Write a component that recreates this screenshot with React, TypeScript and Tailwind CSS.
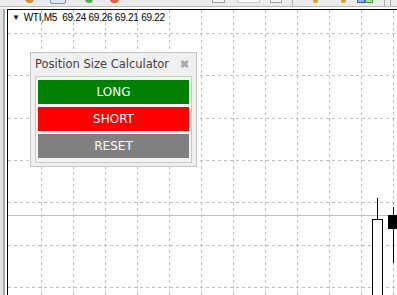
import React from "react";

const W = 389;
const H = 285;

function Grid() {
  const vx = [41, 73, 105, 137, 169, 201, 233, 265, 297, 329, 361, 393].map((x) => x - 8);
  const hy = [33, 75, 118, 160, 202, 245, 287].map((y) => y - 10);
  return (
    <svg width={W} height={H} className="absolute left-0 top-0" shapeRendering="crispEdges">
      {vx.map((x) => (
        <line key={"v" + x} x1={x + 0.5} y1={0} x2={x + 0.5} y2={H} stroke="#c0c0c0" strokeDasharray="3 3" />
      ))}
      {hy.map((y) => (
        <line key={"h" + y} x1={0} y1={y + 0.5} x2={W} y2={y + 0.5} stroke="#c0c0c0" strokeDasharray="3 3" />
      ))}
      <line x1={0} y1={215.5 - 10} x2={W} y2={215.5 - 10} stroke="#c0c0c0" />
      <line x1={377.5 - 8} y1={198 - 10} x2={377.5 - 8} y2={219 - 10} stroke="#000" />
      <rect x={372.5 - 8} y={219.5 - 10} width={10} height={90} fill="#fff" stroke="#000" />
      <line x1={393.5 - 8} y1={207 - 10} x2={393.5 - 8} y2={263 - 10} stroke="#000" />
      <rect x={388 - 8} y={215 - 10} width={12} height={14} fill="#000" />
    </svg>
  );
}

function Toolbar() {
  return (
    <div className="flex items-end h-[7px] overflow-hidden bg-[#ececec] border-b border-[#b8b8b8]">
      <div className="ml-[25px] mb-[3px] w-[9px] h-[9px] shrink-0 rounded-full bg-[#d98a2b]" />
      <div className="ml-[16px] mb-[2px] w-[16px] h-[8px] shrink-0 rounded-[2px] border border-[#7f8db9] bg-[#dfe6f2]" />
      <div className="ml-[19px] mb-[3px] w-[8px] h-[8px] shrink-0 rounded-full bg-[#4caf50]" />
      <div className="ml-[17px] mb-[3px] w-[9px] h-[8px] shrink-0 rounded-full bg-[#e0603a]" />
      <div className="ml-[93px] mb-[3px] w-[13px] h-[6px] shrink-0 border border-[#a0a0a0] bg-[#f4f4f4]" />
      <div className="ml-[12px] mb-[3px] w-[23px] h-[6px] shrink-0 border border-[#c8c8c8] bg-[#fafafa]" />
      <div className="ml-[10px] mb-[3px] w-[12px] h-[6px] shrink-0 border border-[#a0a0a0] bg-[#f4f4f4]" />
      <div className="ml-[10px] w-px h-[6px] shrink-0 bg-[#b0b0b0]" />
      <div className="ml-[20px] mb-[3px] w-[5px] h-[5px] shrink-0 rounded-full bg-[#e0a030]" />
      <div className="ml-[23px] mb-[3px] w-[5px] h-[5px] shrink-0 rounded-full bg-[#e0a030]" />
      <div className="ml-[11px] mb-[3px] w-[8px] h-[6px] shrink-0 border border-[#4060c0] bg-[#90b0f0]" />
      <div className="mb-[3px] w-[8px] h-[6px] shrink-0 border border-[#40a040] bg-[#a0e090]" />
      <div className="ml-[11px] w-px h-[6px] shrink-0 bg-[#b0b0b0]" />
      <div className="ml-[5px] w-px h-[6px] shrink-0 bg-[#b0b0b0]" />
    </div>
  );
}

export default function App() {
  return (
    <div
      className="w-[397px] h-[295px] overflow-hidden bg-[#f0f0f0]"
      style={{ fontFamily: "'Liberation Sans', Arial, sans-serif" }}
    >
      <Toolbar />
      <div className="flex h-[288px]">
        <div className="flex w-[7px] shrink-0 pt-[2px]">
          <div className="w-[3px] bg-[#e2e2e2]" />
          <div className="w-[2px] bg-[#a8a8a8]" />
          <div className="w-[2px] bg-white" />
        </div>
        <div className="flex-1 flex flex-col">
          <div className="h-[2px] bg-white" />
          <div className="relative flex-1 bg-white border-l border-t border-black">
            <Grid />
            <div className="absolute left-[4px] top-[2px] flex items-center gap-[4px] text-[10px] leading-[12px] text-black tracking-[-0.25px]">
              <span className="text-[8px]">▼</span>
              <span>WTI,M5&nbsp; 69.24 69.26 69.21 69.22</span>
            </div>
            <div className="absolute left-[22px] top-[42px] w-[167px] h-[115px] bg-[#f0f0f0] border border-[#c4c4c4] flex flex-col">
              <div className="flex items-center justify-between h-[23px] pl-[4px] pr-[7px]">
                <span className="text-[#404040]" style={{ fontFamily: "'DejaVu Sans', sans-serif", fontSize: "11.5px" }}>
                  Position Size Calculator
                </span>
                <span className="text-[11px] text-[#a8a8a8] font-bold">✖</span>
              </div>
              <div className="mx-[4px] mb-[3px] flex-1 border border-[#c8c8c8] bg-[#f4f4f4] flex flex-col gap-[3px] pt-[3px] px-[2px]">
                <div className="h-[24px] flex items-center justify-center text-white bg-[#008000]" style={{ fontFamily: "'DejaVu Sans', sans-serif", fontSize: "12px" }}>
                  LONG
                </div>
                <div className="h-[24px] flex items-center justify-center text-white bg-[#ff0000]" style={{ fontFamily: "'DejaVu Sans', sans-serif", fontSize: "12px" }}>
                  SHORT
                </div>
                <div className="h-[24px] flex items-center justify-center text-white bg-[#808080]" style={{ fontFamily: "'DejaVu Sans', sans-serif", fontSize: "12px" }}>
                  RESET
                </div>
              </div>
            </div>
          </div>
        </div>
      </div>
    </div>
  );
}
